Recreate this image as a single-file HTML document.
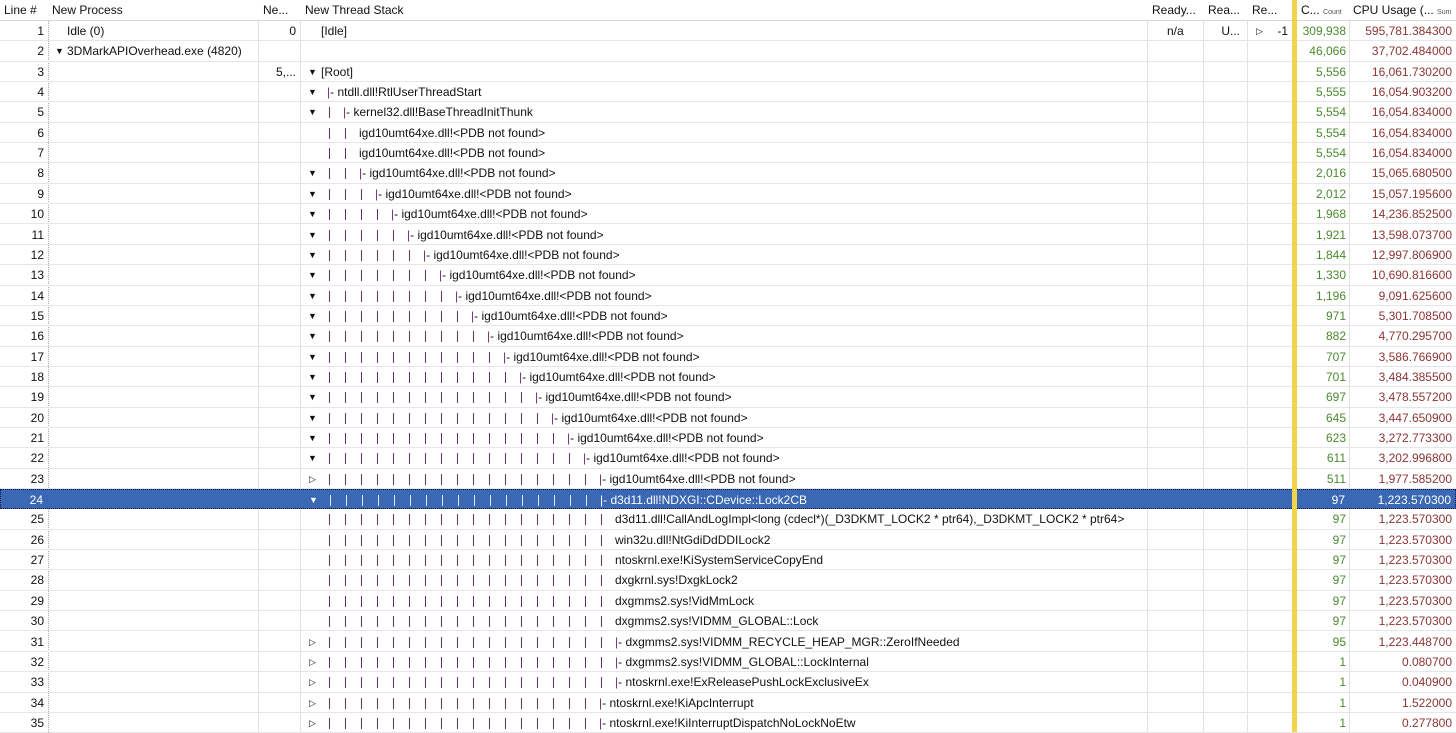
<!DOCTYPE html>
<html><head><meta charset="utf-8"><style>
*{box-sizing:border-box;margin:0;padding:0}
body{width:1456px;height:732px;overflow:hidden;background:#fff;font-family:"Liberation Sans",sans-serif;font-size:12px;color:#111;position:relative}
.hdr{position:absolute;left:0;top:0;width:1456px;height:21px;border-bottom:1px solid #d8d8d8;background:#fff}
.hdr span{position:absolute;top:3px;white-space:nowrap}
.vl{position:absolute;top:0;height:732px;width:1px;background:#e2e2e2}
.row{position:absolute;left:0;width:1456px;height:20.35px;border-bottom:1px solid #e6e6e6}
.row span{position:absolute;top:3px;white-space:nowrap}
.r{text-align:right}
.ln{right:1412px}
.ne{right:1160px}
.c{right:110px;color:#4a8a2e}
.u{right:4px;color:#8b3434}
.p{top:5px!important;height:11px;left:329px;background:repeating-linear-gradient(to right,#6b2d6b 0 1px,transparent 1px 16px)}
.a{font-size:9px;top:5px!important}
.pp{color:#6b2d6b}
.sel{background:#3a68b4;border:1px dotted #0a1a40}
.sel span{color:#fff!important}
.sel .p{background:repeating-linear-gradient(to right,#dfe6f5 0 1px,transparent 1px 16px)}
.sel .pp{color:#fff}
.yb{position:absolute;left:1292px;top:0;width:5px;height:732px;background:#efd44c}
small{font-size:7px;color:#555}
</style></head><body>
<div class="vl" style="left:48px;background:none;border-left:1px dotted #aaa"></div>
<div class="vl" style="left:258px"></div>
<div class="vl" style="left:300px"></div>
<div class="vl" style="left:1147px"></div>
<div class="vl" style="left:1203px"></div>
<div class="vl" style="left:1247px"></div>
<div class="vl" style="left:1349px"></div>
<div class="hdr">
<span style="left:4px">Line #</span>
<span style="left:52px">New Process</span>
<span style="left:263px">Ne...</span>
<span style="left:305px">New Thread Stack</span>
<span style="left:1152px">Ready...</span>
<span style="left:1208px">Rea...</span>
<span style="left:1252px">Re...</span>
<span style="left:1301px">C... <small>Count</small></span>
<span style="left:1353px">CPU Usage (... <small>Sum</small></span>
</div>

<div class="row" style="top:21px"><span class="r ln">1</span><span style="left:67px">Idle (0)</span><span class="r ne">0</span><span style="left:321px">[Idle]</span><span style="left:1167px">n/a</span><span class="r" style="right:216px">U...</span><span class="a" style="left:1256px">▷</span><span class="r" style="right:168px">-1</span><span class="r c">309,938</span><span class="r u">595,781.384300</span></div>
<div class="row" style="top:41.35px"><span class="r ln">2</span><span class="a" style="left:55px">▼</span><span style="left:67px">3DMarkAPIOverhead.exe (4820)</span><span class="r c">46,066</span><span class="r u">37,702.484000</span></div>
<div class="row" style="top:61.7px"><span class="r ln">3</span><span class="r ne">5,...</span><span class="a" style="left:308px">▼</span><span style="left:321px">[Root]</span><span class="r c">5,556</span><span class="r u">16,061.730200</span></div>
<div class="row" style="top:82.05px"><span class="r ln">4</span><span class="a" style="left:308px">▼</span><span style="left:327px"><b class="pp" style="font-weight:normal">|</b>- ntdll.dll!RtlUserThreadStart</span><span class="r c">5,555</span><span class="r u">16,054.903200</span></div>
<div class="row" style="top:102.4px"><span class="r ln">5</span><span class="a" style="left:308px">▼</span><span class="p" style="width:16px"></span><span style="left:343px"><b class="pp" style="font-weight:normal">|</b>- kernel32.dll!BaseThreadInitThunk</span><span class="r c">5,554</span><span class="r u">16,054.834000</span></div>
<div class="row" style="top:122.75px"><span class="r ln">6</span><span class="p" style="width:32px"></span><span style="left:359px">igd10umt64xe.dll!&lt;PDB not found&gt;</span><span class="r c">5,554</span><span class="r u">16,054.834000</span></div>
<div class="row" style="top:143.1px"><span class="r ln">7</span><span class="p" style="width:32px"></span><span style="left:359px">igd10umt64xe.dll!&lt;PDB not found&gt;</span><span class="r c">5,554</span><span class="r u">16,054.834000</span></div>
<div class="row" style="top:163.45px"><span class="r ln">8</span><span class="a" style="left:308px">▼</span><span class="p" style="width:32px"></span><span style="left:359px"><b class="pp" style="font-weight:normal">|</b>- igd10umt64xe.dll!&lt;PDB not found&gt;</span><span class="r c">2,016</span><span class="r u">15,065.680500</span></div>
<div class="row" style="top:183.8px"><span class="r ln">9</span><span class="a" style="left:308px">▼</span><span class="p" style="width:48px"></span><span style="left:375px"><b class="pp" style="font-weight:normal">|</b>- igd10umt64xe.dll!&lt;PDB not found&gt;</span><span class="r c">2,012</span><span class="r u">15,057.195600</span></div>
<div class="row" style="top:204.15px"><span class="r ln">10</span><span class="a" style="left:308px">▼</span><span class="p" style="width:64px"></span><span style="left:391px"><b class="pp" style="font-weight:normal">|</b>- igd10umt64xe.dll!&lt;PDB not found&gt;</span><span class="r c">1,968</span><span class="r u">14,236.852500</span></div>
<div class="row" style="top:224.5px"><span class="r ln">11</span><span class="a" style="left:308px">▼</span><span class="p" style="width:80px"></span><span style="left:407px"><b class="pp" style="font-weight:normal">|</b>- igd10umt64xe.dll!&lt;PDB not found&gt;</span><span class="r c">1,921</span><span class="r u">13,598.073700</span></div>
<div class="row" style="top:244.85px"><span class="r ln">12</span><span class="a" style="left:308px">▼</span><span class="p" style="width:96px"></span><span style="left:423px"><b class="pp" style="font-weight:normal">|</b>- igd10umt64xe.dll!&lt;PDB not found&gt;</span><span class="r c">1,844</span><span class="r u">12,997.806900</span></div>
<div class="row" style="top:265.2px"><span class="r ln">13</span><span class="a" style="left:308px">▼</span><span class="p" style="width:112px"></span><span style="left:439px"><b class="pp" style="font-weight:normal">|</b>- igd10umt64xe.dll!&lt;PDB not found&gt;</span><span class="r c">1,330</span><span class="r u">10,690.816600</span></div>
<div class="row" style="top:285.55px"><span class="r ln">14</span><span class="a" style="left:308px">▼</span><span class="p" style="width:128px"></span><span style="left:455px"><b class="pp" style="font-weight:normal">|</b>- igd10umt64xe.dll!&lt;PDB not found&gt;</span><span class="r c">1,196</span><span class="r u">9,091.625600</span></div>
<div class="row" style="top:305.9px"><span class="r ln">15</span><span class="a" style="left:308px">▼</span><span class="p" style="width:144px"></span><span style="left:471px"><b class="pp" style="font-weight:normal">|</b>- igd10umt64xe.dll!&lt;PDB not found&gt;</span><span class="r c">971</span><span class="r u">5,301.708500</span></div>
<div class="row" style="top:326.25px"><span class="r ln">16</span><span class="a" style="left:308px">▼</span><span class="p" style="width:160px"></span><span style="left:487px"><b class="pp" style="font-weight:normal">|</b>- igd10umt64xe.dll!&lt;PDB not found&gt;</span><span class="r c">882</span><span class="r u">4,770.295700</span></div>
<div class="row" style="top:346.6px"><span class="r ln">17</span><span class="a" style="left:308px">▼</span><span class="p" style="width:176px"></span><span style="left:503px"><b class="pp" style="font-weight:normal">|</b>- igd10umt64xe.dll!&lt;PDB not found&gt;</span><span class="r c">707</span><span class="r u">3,586.766900</span></div>
<div class="row" style="top:366.95px"><span class="r ln">18</span><span class="a" style="left:308px">▼</span><span class="p" style="width:192px"></span><span style="left:519px"><b class="pp" style="font-weight:normal">|</b>- igd10umt64xe.dll!&lt;PDB not found&gt;</span><span class="r c">701</span><span class="r u">3,484.385500</span></div>
<div class="row" style="top:387.3px"><span class="r ln">19</span><span class="a" style="left:308px">▼</span><span class="p" style="width:208px"></span><span style="left:535px"><b class="pp" style="font-weight:normal">|</b>- igd10umt64xe.dll!&lt;PDB not found&gt;</span><span class="r c">697</span><span class="r u">3,478.557200</span></div>
<div class="row" style="top:407.65px"><span class="r ln">20</span><span class="a" style="left:308px">▼</span><span class="p" style="width:224px"></span><span style="left:551px"><b class="pp" style="font-weight:normal">|</b>- igd10umt64xe.dll!&lt;PDB not found&gt;</span><span class="r c">645</span><span class="r u">3,447.650900</span></div>
<div class="row" style="top:428px"><span class="r ln">21</span><span class="a" style="left:308px">▼</span><span class="p" style="width:240px"></span><span style="left:567px"><b class="pp" style="font-weight:normal">|</b>- igd10umt64xe.dll!&lt;PDB not found&gt;</span><span class="r c">623</span><span class="r u">3,272.773300</span></div>
<div class="row" style="top:448.35px"><span class="r ln">22</span><span class="a" style="left:308px">▼</span><span class="p" style="width:256px"></span><span style="left:583px"><b class="pp" style="font-weight:normal">|</b>- igd10umt64xe.dll!&lt;PDB not found&gt;</span><span class="r c">611</span><span class="r u">3,202.996800</span></div>
<div class="row" style="top:468.7px"><span class="r ln">23</span><span class="a" style="left:309px">▷</span><span class="p" style="width:272px"></span><span style="left:599px"><b class="pp" style="font-weight:normal">|</b>- igd10umt64xe.dll!&lt;PDB not found&gt;</span><span class="r c">511</span><span class="r u">1,977.585200</span></div>
<div class="row sel" style="top:489.05px"><span class="r ln">24</span><span class="a" style="left:308px">▼</span><span class="p" style="width:272px"></span><span style="left:599px"><b class="pp" style="font-weight:normal">|</b>- d3d11.dll!NDXGI::CDevice::Lock2CB</span><span class="r c">97</span><span class="r u">1,223.570300</span></div>
<div class="row" style="top:509.4px"><span class="r ln">25</span><span class="p" style="width:288px"></span><span style="left:615px">d3d11.dll!CallAndLogImpl&lt;long (cdecl*)(_D3DKMT_LOCK2 * ptr64),_D3DKMT_LOCK2 * ptr64&gt;</span><span class="r c">97</span><span class="r u">1,223.570300</span></div>
<div class="row" style="top:529.75px"><span class="r ln">26</span><span class="p" style="width:288px"></span><span style="left:615px">win32u.dll!NtGdiDdDDILock2</span><span class="r c">97</span><span class="r u">1,223.570300</span></div>
<div class="row" style="top:550.1px"><span class="r ln">27</span><span class="p" style="width:288px"></span><span style="left:615px">ntoskrnl.exe!KiSystemServiceCopyEnd</span><span class="r c">97</span><span class="r u">1,223.570300</span></div>
<div class="row" style="top:570.45px"><span class="r ln">28</span><span class="p" style="width:288px"></span><span style="left:615px">dxgkrnl.sys!DxgkLock2</span><span class="r c">97</span><span class="r u">1,223.570300</span></div>
<div class="row" style="top:590.8px"><span class="r ln">29</span><span class="p" style="width:288px"></span><span style="left:615px">dxgmms2.sys!VidMmLock</span><span class="r c">97</span><span class="r u">1,223.570300</span></div>
<div class="row" style="top:611.15px"><span class="r ln">30</span><span class="p" style="width:288px"></span><span style="left:615px">dxgmms2.sys!VIDMM_GLOBAL::Lock</span><span class="r c">97</span><span class="r u">1,223.570300</span></div>
<div class="row" style="top:631.5px"><span class="r ln">31</span><span class="a" style="left:309px">▷</span><span class="p" style="width:288px"></span><span style="left:615px"><b class="pp" style="font-weight:normal">|</b>- dxgmms2.sys!VIDMM_RECYCLE_HEAP_MGR::ZeroIfNeeded</span><span class="r c">95</span><span class="r u">1,223.448700</span></div>
<div class="row" style="top:651.85px"><span class="r ln">32</span><span class="a" style="left:309px">▷</span><span class="p" style="width:288px"></span><span style="left:615px"><b class="pp" style="font-weight:normal">|</b>- dxgmms2.sys!VIDMM_GLOBAL::LockInternal</span><span class="r c">1</span><span class="r u">0.080700</span></div>
<div class="row" style="top:672.2px"><span class="r ln">33</span><span class="a" style="left:309px">▷</span><span class="p" style="width:288px"></span><span style="left:615px"><b class="pp" style="font-weight:normal">|</b>- ntoskrnl.exe!ExReleasePushLockExclusiveEx</span><span class="r c">1</span><span class="r u">0.040900</span></div>
<div class="row" style="top:692.55px"><span class="r ln">34</span><span class="a" style="left:309px">▷</span><span class="p" style="width:272px"></span><span style="left:599px"><b class="pp" style="font-weight:normal">|</b>- ntoskrnl.exe!KiApcInterrupt</span><span class="r c">1</span><span class="r u">1.522000</span></div>
<div class="row" style="top:712.9px"><span class="r ln">35</span><span class="a" style="left:309px">▷</span><span class="p" style="width:272px"></span><span style="left:599px"><b class="pp" style="font-weight:normal">|</b>- ntoskrnl.exe!KiInterruptDispatchNoLockNoEtw</span><span class="r c">1</span><span class="r u">0.277800</span></div>
<div class="yb"></div>
</body></html>
